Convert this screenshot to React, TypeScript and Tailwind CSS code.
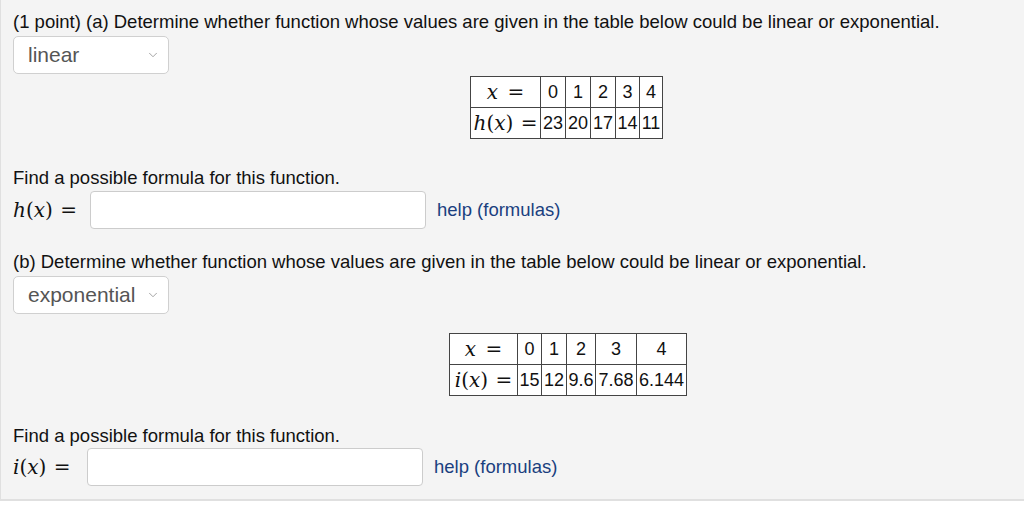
import { ChevronDown } from 'lucide-react'

const sans = { fontFamily: '"Liberation Sans", Arial, sans-serif' }

function Math({ f }: { f: 'x' | 'h' | 'i' }) {
  return (
    <span className="font-['DejaVu_Serif',serif] text-[20px] whitespace-nowrap">
      {f === 'x' ? (
        <>
          <i>x</i> <span className="ml-[3px]">=</span>
        </>
      ) : (
        <>
          <i>{f}</i>(<i>x</i>) <span className="ml-[1px]">=</span>
        </>
      )}
    </span>
  )
}

function Select({ value }: { value: string }) {
  return (
    <div className="mt-1 flex h-[38px] w-[156px] items-center justify-between rounded-[5px] border border-[#d0d0d0] bg-white pl-[14px] pr-[8px]">
      <span className="text-[21px] text-[#555]">{value}</span>
      <ChevronDown className="h-[14px] w-[14px] text-[#888]" strokeWidth={1.3} />
    </div>
  )
}

function ValueTable({ fn, xs, ys, widths, first }: { fn: 'h' | 'i'; xs: string[]; ys: string[]; widths: number[]; first: number }) {
  return (
    <table className="border-collapse border border-[#999] bg-white text-[18px] text-[#111]">
      <tbody>
        <tr className="h-[31px]">
          <td className="border border-[#444] px-0 text-center" style={{ width: first }}>
            <Math f="x" />
          </td>
          {xs.map((v, k) => (
            <td key={k} className="border border-[#444] p-0 text-center" style={{ width: widths[k] }}>
              {v}
            </td>
          ))}
        </tr>
        <tr className="h-[31px]">
          <td className="border border-[#444] p-0 text-center">
            <Math f={fn} />
          </td>
          {ys.map((v, k) => (
            <td key={k} className="border border-[#444] p-0 text-center">
              {v}
            </td>
          ))}
        </tr>
      </tbody>
    </table>
  )
}

function Answer({ fn, inputWidth, top }: { fn: 'h' | 'i'; inputWidth: number; top: number }) {
  return (
    <div className="flex items-center" style={{ marginTop: top }}>
      <span className="shrink-0" style={{ width: fn === 'h' ? 77 : 74 }}>
        <Math f={fn} />
      </span>
      <div className="h-[38px] rounded-[4px] border border-[#ccc] bg-white" style={{ width: inputWidth }} />
      <a className="ml-[11px] text-[18.5px] text-[#1a3f7f]">help (formulas)</a>
    </div>
  )
}

export default function App() {
  return (
    <div className="h-[510px] w-[1024px] bg-white" style={sans}>
      <div className="border-b-2 border-l border-[#e0e0e0] bg-[#f4f4f4] px-3 pb-[13px] pt-[12px] text-[18.5px] leading-5 text-[#111]">
        <p>(1 point) (a) Determine whether function whose values are given in the table below could be linear or exponential.</p>
        <Select value="linear" />
        <div className="mt-[2px] flex justify-center pl-[108px]">
          <ValueTable fn="h" xs={['0', '1', '2', '3', '4']} ys={['23', '20', '17', '14', '11']} widths={[25, 25, 25, 24, 23]} first={70} />
        </div>
        <p className="mt-[29px]">Find a possible formula for this function.</p>
        <Answer fn="h" inputWidth={336} top={3} />
        <p className="mt-[23px]">(b) Determine whether function whose values are given in the table below could be linear or exponential.</p>
        <Select value="exponential" />
        <div className="mt-[19px] flex justify-center pl-[111px]">
          <ValueTable fn="i" xs={['0', '1', '2', '3', '4']} ys={['15', '12', '9.6', '7.68', '6.144']} widths={[24, 25, 29, 41, 50]} first={68} />
        </div>
        <p className="mt-[30px]">Find a possible formula for this function.</p>
        <Answer fn="i" inputWidth={336} top={2} />
      </div>
    </div>
  )
}
